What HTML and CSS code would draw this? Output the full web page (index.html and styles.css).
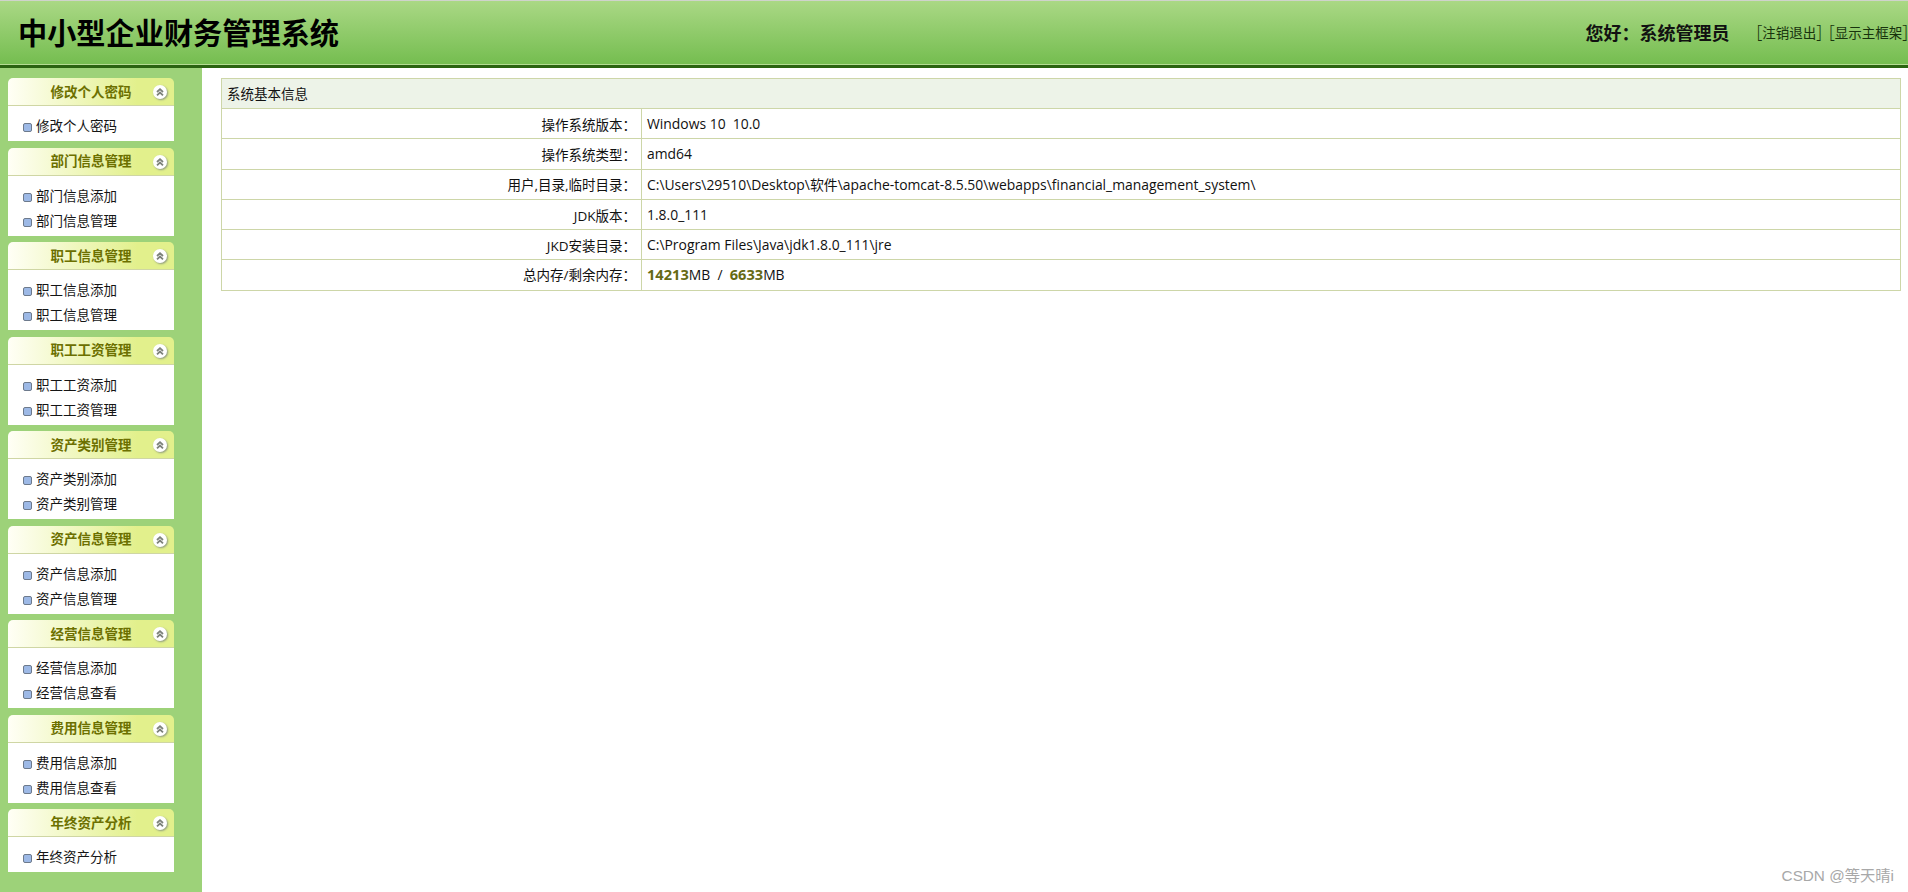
FILE: index.html
```html
<!DOCTYPE html>
<html lang="zh">
<head>
<meta charset="utf-8">
<title>中小型企业财务管理系统</title>
<link rel="stylesheet" href="styles.css">
</head>
<body>
<svg class="sprites" width="0" height="0" aria-hidden="true">
  <symbol id="chev" viewBox="0 0 14 14">
    <path d="M4 7 L7 4.2 L10 7 M4 10.4 L7 7.6 L10 10.4" fill="none" stroke="#7c817a" stroke-width="1.8"/>
  </symbol>
</svg>
<header class="top">
  <h1 class="title">中小型企业财务管理系统</h1>
  <div class="user">
    <span class="hello">您好：系统管理员</span>
    <span class="links"><span class="link"><span class="br">[</span>注销退出<span class="br">]</span></span><span class="link"><span class="br">[</span>显示主框架<span class="br">]</span></span></span>
  </div>
</header>
<div class="layout">
  <nav class="side">
    <section class="panel">
      <div class="phead"><span>修改个人密码</span><i class="tog"><svg><use href="#chev"/></svg></i></div>
      <ul class="pbody"><li>修改个人密码</li></ul>
    </section>
    <section class="panel">
      <div class="phead"><span>部门信息管理</span><i class="tog"><svg><use href="#chev"/></svg></i></div>
      <ul class="pbody"><li>部门信息添加</li><li>部门信息管理</li></ul>
    </section>
    <section class="panel">
      <div class="phead"><span>职工信息管理</span><i class="tog"><svg><use href="#chev"/></svg></i></div>
      <ul class="pbody"><li>职工信息添加</li><li>职工信息管理</li></ul>
    </section>
    <section class="panel">
      <div class="phead"><span>职工工资管理</span><i class="tog"><svg><use href="#chev"/></svg></i></div>
      <ul class="pbody"><li>职工工资添加</li><li>职工工资管理</li></ul>
    </section>
    <section class="panel">
      <div class="phead"><span>资产类别管理</span><i class="tog"><svg><use href="#chev"/></svg></i></div>
      <ul class="pbody"><li>资产类别添加</li><li>资产类别管理</li></ul>
    </section>
    <section class="panel">
      <div class="phead"><span>资产信息管理</span><i class="tog"><svg><use href="#chev"/></svg></i></div>
      <ul class="pbody"><li>资产信息添加</li><li>资产信息管理</li></ul>
    </section>
    <section class="panel">
      <div class="phead"><span>经营信息管理</span><i class="tog"><svg><use href="#chev"/></svg></i></div>
      <ul class="pbody"><li>经营信息添加</li><li>经营信息查看</li></ul>
    </section>
    <section class="panel">
      <div class="phead"><span>费用信息管理</span><i class="tog"><svg><use href="#chev"/></svg></i></div>
      <ul class="pbody"><li>费用信息添加</li><li>费用信息查看</li></ul>
    </section>
    <section class="panel">
      <div class="phead"><span>年终资产分析</span><i class="tog"><svg><use href="#chev"/></svg></i></div>
      <ul class="pbody"><li>年终资产分析</li></ul>
    </section>
  </nav>
  <main class="main">
    <table class="info">
      <colgroup><col class="kcol"><col></colgroup>
      <tr class="cap"><th colspan="2">系统基本信息</th></tr>
      <tr><td class="k">操作系统版本：</td><td class="v">Windows 10&nbsp; 10.0</td></tr>
      <tr><td class="k">操作系统类型：</td><td class="v">amd64</td></tr>
      <tr><td class="k">用户,目录,临时目录：</td><td class="v">C:\Users\29510\Desktop\软件\apache-tomcat-8.5.50\webapps\financial_management_system\</td></tr>
      <tr><td class="k">JDK版本：</td><td class="v">1.8.0_111</td></tr>
      <tr><td class="k">JKD安装目录：</td><td class="v">C:\Program Files\Java\jdk1.8.0_111\jre</td></tr>
      <tr class="mem"><td class="k">总内存/剩余内存：</td><td class="v"><b>14213</b>MB &nbsp;/&nbsp; <b>6633</b>MB</td></tr>
    </table>
  </main>
</div>
<div class="mark">CSDN @等天晴i</div>
</body>
</html>
```
FILE: styles.css
```css
* { box-sizing: border-box; }
html, body { margin: 0; height: 100%; }
body {
  font-family: "Open Sans", "Noto Sans CJK SC", sans-serif;
  font-size: 13.5px;
  color: #111;
  background: #fff;
  overflow: hidden;
  display: flex;
  flex-direction: column;
}
.sprites { position: absolute; }

.top {
  flex: none;
  height: 68px;
  display: flex;
  align-items: center;
  justify-content: space-between;
  padding: 0 0 2px 18px;
  border-top: 1px solid #cfd3cc;
  border-bottom: 3px solid #2a6410;
  box-shadow: inset 0 -1px 0 #b4dc92;
  background: linear-gradient(#aad885, #74bd4f);
}
.title {
  margin: 0;
  font: 700 29.2px/1 "Noto Sans CJK SC", sans-serif;
  color: #000;
}
.user { display: flex; align-items: center; gap: 27px; }
.hello { font: 700 18px/1 "Noto Sans CJK SC", sans-serif; color: #111; }
.links { display: flex; gap: 7px; font-size: 13.5px; line-height: 20px; white-space: nowrap; color: #18330d; }
.br { font-size: 18px; font-weight: 300; }

.layout { flex: 1; display: flex; min-height: 0; }
.side {
  flex: none;
  width: 202px;
  padding: 10px 28px 0 8px;
  background: #9dd279;
}
.panel { margin-bottom: 6.5px; }
.phead {
  height: 28px;
  position: relative;
  display: flex;
  align-items: center;
  justify-content: center;
  padding-bottom: 2px;
  border-radius: 5px 5px 0 0;
  border-bottom: 1px solid #cfd6a4;
  background: linear-gradient(90deg, #fffff6, #e2f08c 78%, #e2f08c);
  font-weight: 700;
  color: #6c7000;
}
.tog {
  position: absolute;
  right: 7px;
  top: 7px;
  width: 14px;
  height: 14px;
  border-radius: 50%;
  background: #fff;
  box-shadow: 1px 1px 2px #8f9a80;
  display: flex;
}
.tog svg { width: 14px; height: 14px; }

.pbody {
  list-style: none;
  margin: 0;
  padding: 8px 0 2px 28px;
  background: #fff;
}
.pbody li {
  height: 25px;
  line-height: 25px;
  position: relative;
  color: #151515;
}
.pbody li::before {
  content: "";
  position: absolute;
  left: -13px;
  top: 9px;
  width: 7px;
  height: 7px;
  border-radius: 2px;
  border: 1px solid #6d7a8c;
  background: #9db9e6;
}

.main { flex: 1; padding: 10px 7px 0 19px; min-width: 0; }
.info {
  width: 100%;
  table-layout: fixed;
  border-collapse: collapse;
}
.info th, .info td {
  border: 1px solid #cdd6a8;
  padding: 0 5px;
  height: 30.3px;
  font-weight: 400;
}
.cap th { text-align: left; background: #edf3e8; height: 30px; padding-bottom: 2px; }
.kcol { width: 420px; }
.k { text-align: right; padding-right: 4px; }
.v { font-size: 13.9px; }
.v b { color: #666a14; font-weight: 700; font-size: 14.6px; }
.mem td { padding-bottom: 2px; }

.mark {
  position: absolute;
  right: 14px;
  bottom: 7px;
  font: 15.3px/18px "Liberation Sans", "Noto Sans CJK SC", sans-serif;
  color: #a8a8a8;
}
```
